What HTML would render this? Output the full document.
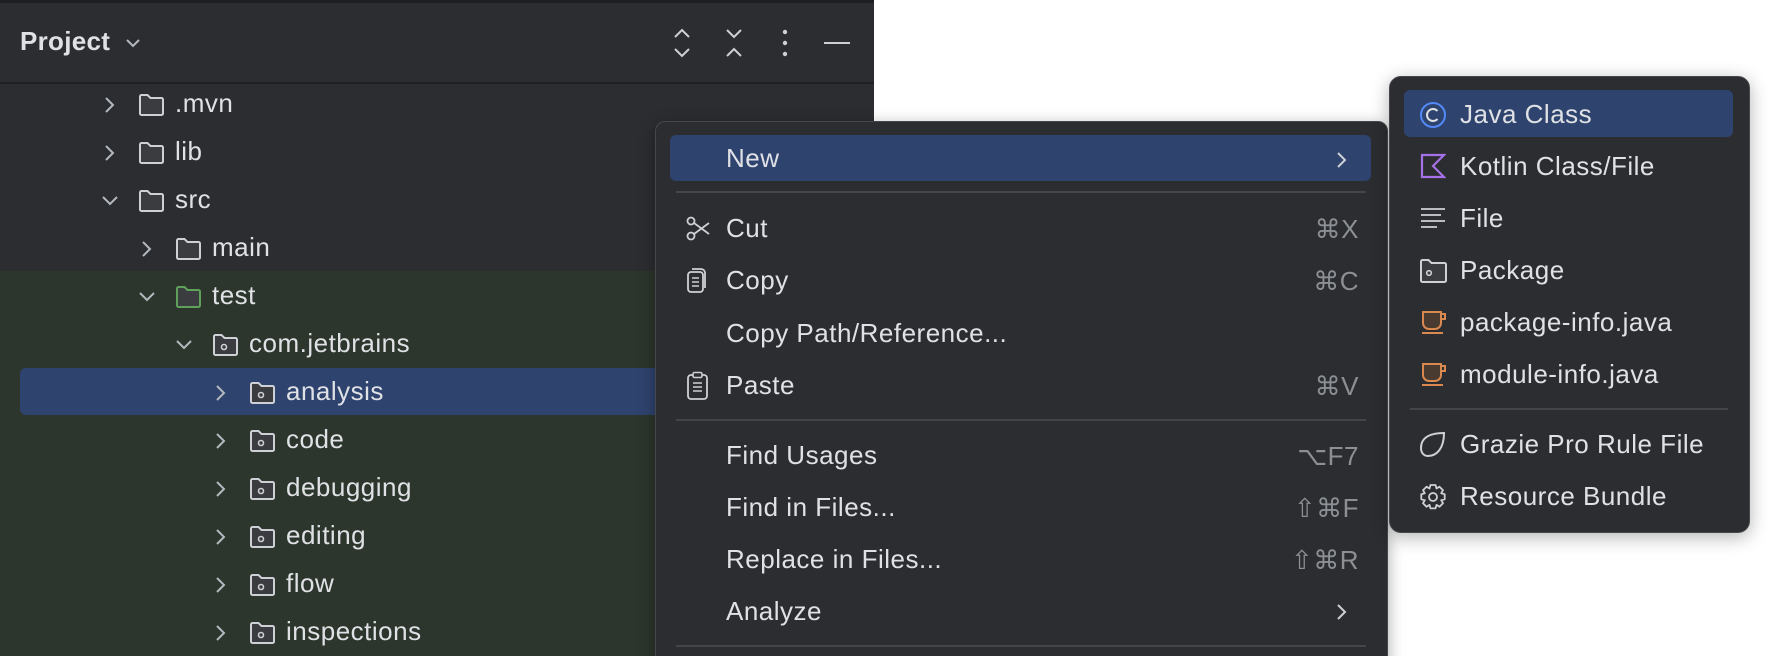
<!DOCTYPE html>
<html><head><meta charset="utf-8"><style>
*{margin:0;padding:0;box-sizing:border-box}
html,body{width:1774px;height:656px;overflow:hidden}
body{background:#fff;font-family:"Liberation Sans",sans-serif;font-size:26px;letter-spacing:0.5px;color:#dfe1e5;position:relative}
#wrap{position:absolute;left:0;top:0;width:1774px;height:656px;overflow:hidden}
.panel{position:absolute;left:0;top:0;width:874px;height:656px;background:#2b2d30}
.top{position:absolute;left:0;top:0;width:874px;height:3px;background:#1e1f22}
.hdr{position:absolute;left:0;top:82px;width:874px;height:2px;background:#1e1f22}
.green{position:absolute;left:0;top:271px;width:874px;height:385px;background:#2c362c}
.sel{position:absolute;left:20px;top:368px;width:660px;height:47px;background:#2e436e;border-radius:6px}
.ab{position:absolute;white-space:nowrap}
.row{position:absolute;height:48px;line-height:48px;white-space:nowrap}
.row svg{position:absolute}
.menu{position:absolute;left:655px;top:121px;width:733px;height:560px;background:#2b2d30;border:1.5px solid #45474c;border-radius:10px;box-shadow:0 4px 16px rgba(0,0,0,.35)}
.sub{position:absolute;left:1389px;top:76px;width:361px;height:457px;background:#2b2d30;border:1.5px solid #45474c;border-radius:12px;box-shadow:0 4px 18px rgba(0,0,0,.3)}
.sep{position:absolute;height:2px;background:#43454a}
.sc{position:absolute;color:#8c8f94;text-align:right;white-space:nowrap}
.t{position:absolute;white-space:nowrap;margin-top:-1px}
</style></head><body><div id="wrap">
<div class="panel"></div>
<div class="top"></div>
<div class="hdr"></div>
<div class="green"></div>
<div class="sel"></div>
<div class="ab" style="left:20px;top:26px;font-weight:bold;font-size:26px;letter-spacing:0.3px">Project</div>
<svg class="ab" style="left:124px;top:36px" width="18" height="14"><path d="M3 4l6 6 6-6" stroke="#b4b8bf" stroke-width="2" fill="none"/></svg>
<svg class="ab" style="left:670px;top:26px" width="24" height="34"><path d="M5 11l7-7 7 7M5 23l7 7 7-7" stroke="#ced0d6" stroke-width="2" fill="none"/></svg>
<svg class="ab" style="left:722px;top:26px" width="24" height="34"><path d="M5 4l7 7 7-7M5 30l7-7 7 7" stroke="#ced0d6" stroke-width="2" fill="none"/></svg>
<svg class="ab" style="left:779px;top:28px" width="12" height="32"><circle cx="6" cy="4" r="2.2" fill="#ced0d6"/><circle cx="6" cy="15" r="2.2" fill="#ced0d6"/><circle cx="6" cy="26" r="2.2" fill="#ced0d6"/></svg>
<div class="ab" style="left:824px;top:42px;width:26px;height:2px;background:#ced0d6"></div>

<div id="tree"></div>
<script>
var rows=[[".mvn",0,"r",0],["lib",0,"r",0],["src",0,"d",0],["main",1,"r",0],["test",1,"d",1],["com.jetbrains",2,"d",2],["analysis",3,"r",2],["code",3,"r",2],["debugging",3,"r",2],["editing",3,"r",2],["flow",3,"r",2],["inspections",3,"r",2]];
var h="";
rows.forEach(function(r,i){var y=81+i*48,x=100+r[1]*37;
var ch=r[2]=="r"?'<path d="M6 5l7 7-7 7" stroke="#b4b8bf" stroke-width="2" fill="none"/>':'<path d="M3 8l7 7 7-7" stroke="#b4b8bf" stroke-width="2" fill="none"/>';
var col=r[3]==1?"#5fa05a":"#ced0d6";
var fold='<path d="M2 4.5a1.5 1.5 0 0 1 1.5-1.5h6l3 3h11a1.5 1.5 0 0 1 1.5 1.5v14a1.5 1.5 0 0 1-1.5 1.5h-20a1.5 1.5 0 0 1-1.5-1.5z" fill="#3a3c40" stroke="'+col+'" stroke-width="2"/>'+(r[3]==2?'<circle cx="12" cy="15" r="2.5" fill="none" stroke="#ced0d6" stroke-width="1.6"/>':'');
h+='<div class="row" style="left:'+x+'px;top:'+y+'px"><svg style="left:0;top:12px" width="20" height="24">'+ch+'</svg><svg style="left:38px;top:11px" width="28" height="26">'+fold+'</svg><span style="position:absolute;left:75px;top:-2px">'+r[0]+'</span></div>';});
document.getElementById("tree").innerHTML=h;
</script>

<div class="menu"></div>
<div class="ab" style="left:670px;top:135px;width:701px;height:46px;background:#2e436e;border-radius:6px"></div>
<div class="t" style="left:726px;top:144px">New</div>
<svg class="ab" style="left:1334px;top:148px" width="16" height="24"><path d="M4 5l7 7-7 7" stroke="#ced0d6" stroke-width="2" fill="none"/></svg>
<div class="sep" style="left:676px;top:191px;width:690px"></div>

<svg class="ab" style="left:686px;top:216px" width="26" height="26"><circle cx="5" cy="5" r="3.5" fill="none" stroke="#ced0d6" stroke-width="1.8"/><circle cx="5" cy="20" r="3.5" fill="none" stroke="#ced0d6" stroke-width="1.8"/><path d="M8 7l15 11M8 18L23 7" stroke="#ced0d6" stroke-width="1.8"/></svg>
<div class="t" style="left:726px;top:214px">Cut</div><div class="sc" style="right:415px;top:214px">⌘X</div>
<svg class="ab" style="left:686px;top:267px" width="26" height="30"><rect x="2" y="5" width="15" height="20" rx="3" fill="none" stroke="#ced0d6" stroke-width="1.8"/><path d="M6 2h9a4 4 0 0 1 4 4v15" fill="none" stroke="#ced0d6" stroke-width="1.8"/><path d="M6 11h7M6 15h7M6 19h7" stroke="#ced0d6" stroke-width="1.6"/></svg>
<div class="t" style="left:726px;top:266px">Copy</div><div class="sc" style="right:415px;top:266px">⌘C</div>
<div class="t" style="left:726px;top:319px">Copy Path/Reference...</div>
<svg class="ab" style="left:686px;top:371px" width="26" height="30"><rect x="2" y="4" width="19" height="24" rx="3" fill="none" stroke="#ced0d6" stroke-width="1.8"/><rect x="7" y="1.5" width="9" height="5" rx="1.5" fill="#2b2d30" stroke="#ced0d6" stroke-width="1.6"/><path d="M7 12h9M7 16h9M7 20h9" stroke="#ced0d6" stroke-width="1.6"/></svg>
<div class="t" style="left:726px;top:371px">Paste</div><div class="sc" style="right:415px;top:371px">⌘V</div>
<div class="sep" style="left:676px;top:419px;width:690px"></div>
<div class="t" style="left:726px;top:441px">Find Usages</div><div class="sc" style="right:415px;top:441px">⌥F7</div>
<div class="t" style="left:726px;top:493px">Find in Files...</div><div class="sc" style="right:415px;top:493px">⇧⌘F</div>
<div class="t" style="left:726px;top:545px">Replace in Files...</div><div class="sc" style="right:415px;top:545px">⇧⌘R</div>
<div class="t" style="left:726px;top:597px">Analyze</div>
<svg class="ab" style="left:1334px;top:600px" width="16" height="24"><path d="M4 5l7 7-7 7" stroke="#ced0d6" stroke-width="2" fill="none"/></svg>
<div class="sep" style="left:676px;top:645px;width:690px"></div>

<div class="sub"></div>
<div class="ab" style="left:1404px;top:90px;width:329px;height:47px;background:#2e436e;border-radius:6px"></div>
<svg class="ab" style="left:1419px;top:101px" width="28" height="28"><circle cx="14" cy="14" r="12" fill="none" stroke="#548af7" stroke-width="2"/><path d="M18.5 10a6 6 0 1 0 0 8" fill="none" stroke="#dfe1e5" stroke-width="2"/></svg>
<div class="t" style="left:1460px;top:100px">Java Class</div>
<svg class="ab" style="left:1420px;top:153px" width="26" height="26"><path d="M2 2h22L13 13l11 11H2z" fill="none" stroke="#a571e6" stroke-width="2.2"/></svg>
<div class="t" style="left:1460px;top:152px">Kotlin Class/File</div>
<svg class="ab" style="left:1420px;top:207px" width="26" height="22"><path d="M1 2h24M1 8h20M1 14h24M1 20h16" stroke="#ced0d6" stroke-width="1.8"/></svg>
<div class="t" style="left:1460px;top:204px">File</div>
<svg class="ab" style="left:1419px;top:257px" width="30" height="28"><path d="M2 4.5a1.5 1.5 0 0 1 1.5-1.5h6l3 3h13a1.5 1.5 0 0 1 1.5 1.5v16a1.5 1.5 0 0 1-1.5 1.5h-22a1.5 1.5 0 0 1-1.5-1.5z" fill="#3a3c40" stroke="#ced0d6" stroke-width="2"/><circle cx="10" cy="16" r="2.3" fill="none" stroke="#ced0d6" stroke-width="1.6"/></svg>
<div class="t" style="left:1460px;top:256px">Package</div>
<svg class="ab" style="left:1420px;top:309px" width="30" height="26"><path d="M3 3h18v11a6 6 0 0 1-6 6h-6a6 6 0 0 1-6-6z" fill="#4a3b30" stroke="#d98850" stroke-width="2"/><path d="M21 5h4v5h-4" fill="none" stroke="#d98850" stroke-width="2"/><path d="M2 24h21" stroke="#d98850" stroke-width="2"/></svg>
<div class="t" style="left:1460px;top:308px">package-info.java</div>
<svg class="ab" style="left:1420px;top:361px" width="30" height="26"><path d="M3 3h18v11a6 6 0 0 1-6 6h-6a6 6 0 0 1-6-6z" fill="#4a3b30" stroke="#d98850" stroke-width="2"/><path d="M21 5h4v5h-4" fill="none" stroke="#d98850" stroke-width="2"/><path d="M2 24h21" stroke="#d98850" stroke-width="2"/></svg>
<div class="t" style="left:1460px;top:360px">module-info.java</div>
<div class="sep" style="left:1410px;top:408px;width:318px"></div>
<svg class="ab" style="left:1419px;top:431px" width="28" height="28"><path d="M25 2C12 2 2 6 2 17c0 5 3 8 7 8 9 0 16-8 16-23z" fill="none" stroke="#ced0d6" stroke-width="2"/></svg>
<div class="t" style="left:1460px;top:430px">Grazie Pro Rule File</div>
<svg class="ab" style="left:1419px;top:483px" width="28" height="28" viewBox="0 0 28 28"><path d="M11.5 2h5l1 3.5 3-1.8 3.5 3.5-1.8 3 3.5 1v5l-3.5 1 1.8 3-3.5 3.5-3-1.8-1 3.5h-5l-1-3.5-3 1.8-3.5-3.5 1.8-3-3.5-1v-5l3.5-1-1.8-3 3.5-3.5 3 1.8z" fill="none" stroke="#ced0d6" stroke-width="1.8" stroke-linejoin="round"/><circle cx="14" cy="14" r="4" fill="none" stroke="#ced0d6" stroke-width="1.8"/></svg>
<div class="t" style="left:1460px;top:482px">Resource Bundle</div>
</div></body></html>
